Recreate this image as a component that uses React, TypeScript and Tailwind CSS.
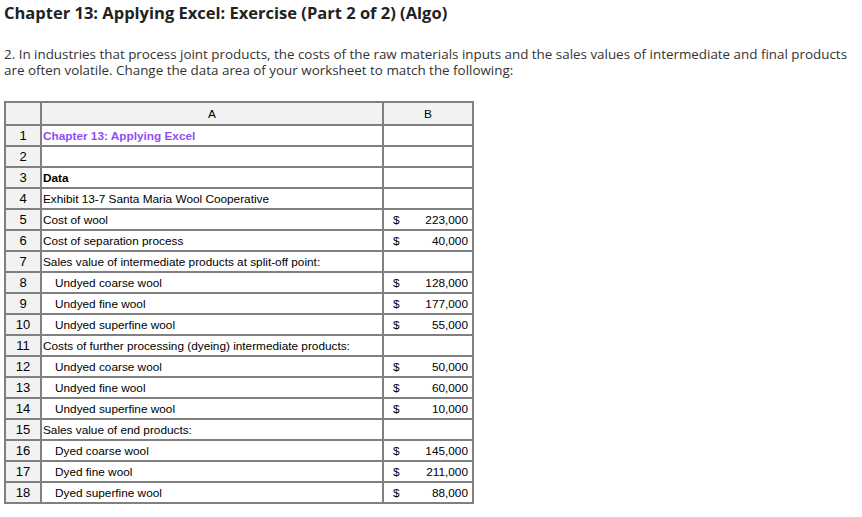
import React from 'react';

type Row = {
  label: string;
  indent?: boolean;
  bold?: boolean;
  title?: boolean;
  value?: string;
};

const rows: Row[] = [
  { label: 'Chapter 13: Applying Excel', title: true },
  { label: '' },
  { label: 'Data', bold: true },
  { label: 'Exhibit 13-7 Santa Maria Wool Cooperative' },
  { label: 'Cost of wool', value: '223,000' },
  { label: 'Cost of separation process', value: '40,000' },
  { label: 'Sales value of intermediate products at split-off point:' },
  { label: 'Undyed coarse wool', indent: true, value: '128,000' },
  { label: 'Undyed fine wool', indent: true, value: '177,000' },
  { label: 'Undyed superfine wool', indent: true, value: '55,000' },
  { label: 'Costs of further processing (dyeing) intermediate products:' },
  { label: 'Undyed coarse wool', indent: true, value: '50,000' },
  { label: 'Undyed fine wool', indent: true, value: '60,000' },
  { label: 'Undyed superfine wool', indent: true, value: '10,000' },
  { label: 'Sales value of end products:' },
  { label: 'Dyed coarse wool', indent: true, value: '145,000' },
  { label: 'Dyed fine wool', indent: true, value: '211,000' },
  { label: 'Dyed superfine wool', indent: true, value: '88,000' },
];

export default function App() {
  return (
    <div className="bg-white min-h-[517px] px-[4px] pt-[3px] text-[#222]" style={{ fontFamily: '"Open Sans", Lato, sans-serif' }}>
      <h1 className="text-[16.5px] font-bold leading-[20px] text-[#222]">
        Chapter 13: Applying Excel: Exercise (Part 2 of 2) (Algo)
      </h1>
      <p className="mt-[23px] text-[13.4px] leading-[16px] text-[#333]">
        2. In industries that process joint products, the costs of the raw materials inputs and the sales values of intermediate and final products are often volatile. Change the data area of your worksheet to match the following:
      </p>

      <table
        className="mt-[23px] border-collapse text-[11.8px] leading-[16px] text-black"
        style={{ fontFamily: '"Liberation Sans", Arial, sans-serif' }}
      >
        <thead>
          <tr className="h-[23px] bg-[#f2f2f2]">
            <th className="w-[36px] border-2 border-[#808080] font-normal"></th>
            <th className="w-[342px] border-2 border-[#808080] font-normal text-center">A</th>
            <th className="w-[90px] border-2 border-[#808080] font-normal text-center">B</th>
          </tr>
        </thead>
        <tbody>
          {rows.map((r, i) => (
            <tr key={i} className="h-[21px]">
              <td className="border-2 border-[#808080] bg-[#f2f2f2] text-center text-[13px] leading-[16px] p-0">{i + 1}</td>
              <td
                className={`border-2 border-[#808080] p-0 ${r.indent ? 'pl-[13px]' : 'pl-[1px]'} ${r.bold ? 'font-bold' : ''} ${r.title ? 'font-bold text-[#8f4ef5]' : ''}`}
              >
                {r.label}
              </td>
              <td className="border-2 border-[#808080] p-0 pr-[4px]">
                {r.value && (
                  <div className="flex justify-between pl-[9px]">
                    <span>$</span>
                    <span>{r.value}</span>
                  </div>
                )}
              </td>
            </tr>
          ))}
        </tbody>
      </table>
    </div>
  );
}
